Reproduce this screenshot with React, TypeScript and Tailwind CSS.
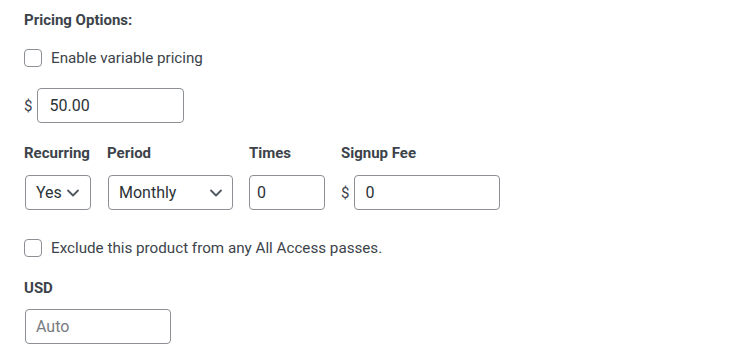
import { ChevronDown } from "lucide-react";

function Checkbox() {
  return (
    <span className="inline-block h-[18px] w-[18px] shrink-0 rounded-[4px] border border-[#8c8f94] bg-white" />
  );
}

function Label({ children }: { children: React.ReactNode }) {
  return (
    <div className="h-5 text-[15px] font-bold leading-5 text-[#3c434a]">
      {children}
    </div>
  );
}

export default function App() {
  return (
    <div
      className="min-h-screen bg-white pl-6 pt-[10px] text-[15px] leading-5 text-[#3c434a]"
      style={{ fontFamily: "Roboto, 'Liberation Sans', sans-serif" }}
    >
      <Label>Pricing Options:</Label>

      <label className="mt-[19px] flex h-[18px] items-center gap-[9px]">
        <Checkbox />
        <span className="text-[15.2px]">Enable variable pricing</span>
      </label>

      <div className="mt-[21px] flex items-center gap-[5px]">
        <span>$</span>
        <div className="flex h-[35px] w-[147px] items-center rounded-[4px] border border-[#8c8f94] px-[11px] text-[16px] text-[#2c3338]">
          50.00
        </div>
      </div>

      <div className="mt-[20px] flex gap-4">
        <div className="flex w-[67px] flex-col gap-[12px]">
          <Label>Recurring</Label>
          <div className="ml-px flex h-[35px] w-[66px] items-center justify-between rounded-[4px] border border-[#8c8f94] pl-[10px] pr-[7px] text-[16px] text-[#2c3338]">
            <span>Yes</span>
            <ChevronDown size={20} strokeWidth={2.2} className="text-[#50575e]" />
          </div>
        </div>
        <div className="flex w-[126px] flex-col gap-[12px]">
          <Label>Period</Label>
          <div className="ml-px flex h-[35px] w-[125px] items-center justify-between rounded-[4px] border border-[#8c8f94] pl-[10px] pr-[6px] text-[16px] text-[#2c3338]">
            <span>Monthly</span>
            <ChevronDown size={20} strokeWidth={2.2} className="text-[#50575e]" />
          </div>
        </div>
        <div className="flex w-[76px] flex-col gap-[12px]">
          <Label>Times</Label>
          <div className="flex h-[35px] w-[76px] items-center rounded-[4px] border border-[#8c8f94] px-[7px] text-[16px] text-[#2c3338]">
            0
          </div>
        </div>
        <div className="flex w-[160px] flex-col gap-[12px]">
          <Label>Signup Fee</Label>
          <div className="flex items-center gap-[5px]">
            <span>$</span>
            <div className="flex h-[35px] w-[146px] items-center rounded-[4px] border border-[#8c8f94] px-[10px] text-[16px] text-[#2c3338]">
              0
            </div>
          </div>
        </div>
      </div>

      <label className="mt-[29px] flex h-[18px] items-center gap-[9px]">
        <Checkbox />
        <span className="text-[15.2px]">Exclude this product from any All Access passes.</span>
      </label>

      <div className="mt-[21px]">
        <Label>USD</Label>
      </div>

      <div className="ml-px mt-[11px] flex h-[35px] w-[146px] items-center rounded-[4px] border border-[#8c8f94] px-[10px] text-[16px] text-[#787c82]">
        Auto
      </div>
    </div>
  );
}
